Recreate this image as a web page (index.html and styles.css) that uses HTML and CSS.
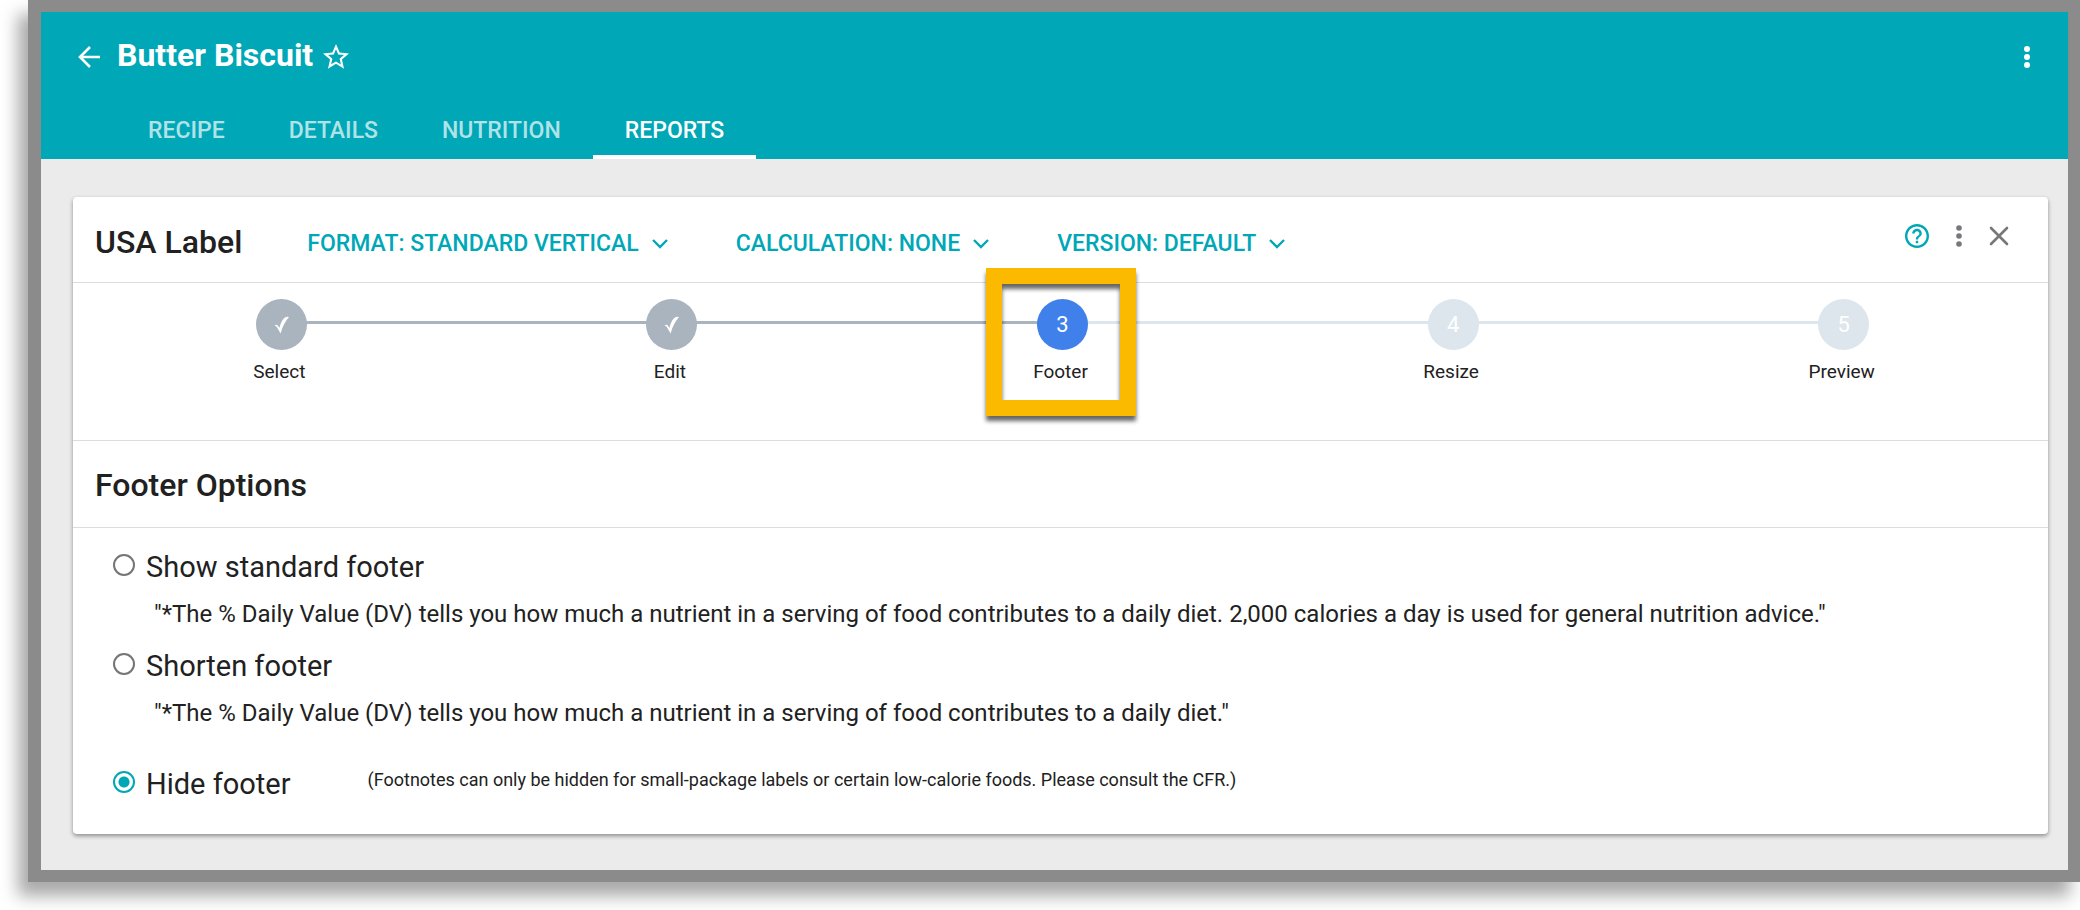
FILE: index.html
```html
<!DOCTYPE html>
<html lang="en">
<head>
<meta charset="utf-8">
<meta name="viewport" content="width=device-width, initial-scale=1">
<title>Butter Biscuit - Reports</title>
<link rel="stylesheet" href="styles.css">
</head>
<body>
<div class="frame">
  <header class="app-header">
    <div class="title-row">
      <button class="icon-btn" type="button" aria-label="Back">
        <svg width="22" height="22" viewBox="0 0 22 22" fill="none" stroke="#fff" stroke-width="2.6"><path d="M22 11H2M12 1L2 11l10 10"/></svg>
      </button>
      <h1 class="recipe-name">Butter Biscuit</h1>
      <button class="icon-btn star" type="button" aria-label="Favorite">
        <svg width="26" height="26" viewBox="2 2 20 20" fill="#fff"><path d="M22 9.24l-7.19-.62L12 2 9.19 8.63 2 9.24l5.46 4.73L5.82 21 12 17.27 18.18 21l-1.63-7.03L22 9.24zM12 15.4l-3.76 2.27 1-4.28-3.32-2.88 4.38-.38L12 6.1l1.71 4.04 4.38.38-3.32 2.88 1 4.28L12 15.4z"/></svg>
      </button>
      <button class="icon-btn push" type="button" aria-label="More actions">
        <svg width="6" height="22" viewBox="0 0 6 22" fill="#fff"><circle cx="3" cy="3" r="3"/><circle cx="3" cy="11" r="3"/><circle cx="3" cy="19" r="3"/></svg>
      </button>
    </div>
    <nav class="tabs">
      <a class="tab" href="#recipe">RECIPE</a>
      <a class="tab" href="#details">DETAILS</a>
      <a class="tab" href="#nutrition">NUTRITION</a>
      <a class="tab active" href="#reports" aria-current="page">REPORTS</a>
    </nav>
  </header>

  <main class="content">
    <section class="card">
      <div class="card-header">
        <h2 class="heading">USA Label</h2>
        <div class="menus">
          <button class="menu" type="button">FORMAT: STANDARD VERTICAL
            <svg width="16" height="10" viewBox="0 0 16 10" fill="none" stroke="currentColor" stroke-width="2.4"><path d="M1 1l7 7 7-7"/></svg></button>
          <button class="menu" type="button">CALCULATION: NONE
            <svg width="16" height="10" viewBox="0 0 16 10" fill="none" stroke="currentColor" stroke-width="2.4"><path d="M1 1l7 7 7-7"/></svg></button>
          <button class="menu" type="button">VERSION: DEFAULT
            <svg width="16" height="10" viewBox="0 0 16 10" fill="none" stroke="currentColor" stroke-width="2.4"><path d="M1 1l7 7 7-7"/></svg></button>
        </div>
        <div class="actions">
          <button class="icon-btn" type="button" aria-label="Help">
            <svg width="24" height="24" viewBox="2 2 20 20" fill="#00a7b7"><path d="M11 18h2v-2h-2v2zm1-16C6.48 2 2 6.48 2 12s4.48 10 10 10 10-4.48 10-10S17.52 2 12 2zm0 18c-4.41 0-8-3.59-8-8s3.59-8 8-8 8 3.59 8 8-3.59 8-8 8zm0-14c-2.21 0-4 1.79-4 4h2c0-1.1.9-2 2-2s2 .9 2 2c0 2-3 1.75-3 5h2c0-2.25 3-2.5 3-5 0-2.21-1.79-4-4-4z"/></svg>
          </button>
          <button class="icon-btn" type="button" aria-label="Label options">
            <svg width="6" height="22" viewBox="0 0 6 22" fill="#77787b"><circle cx="3" cy="3" r="2.8"/><circle cx="3" cy="11" r="2.8"/><circle cx="3" cy="19" r="2.8"/></svg>
          </button>
          <button class="icon-btn" type="button" aria-label="Close">
            <svg width="20" height="20" viewBox="0 0 20 20" fill="none" stroke="#77787b" stroke-width="2.6" stroke-linecap="round"><path d="M2 2l16 16M18 2L2 18"/></svg>
          </button>
        </div>
      </div>

      <ol class="steps">
        <li class="step done">
          <span class="dot"><svg width="15" height="18" viewBox="0 0 15 18" fill="#fff"><path d="M0.500 9.600Q2 8.200 3.400 9L5.400 12C6.400 7.500 8.500 3 11 1.400Q12.500 0.600 15 1C11.500 5 8.600 10 6.600 17.400Q5 15 3.200 11.500Q2.200 10 0.500 9.600Z"/></svg></span>
          <span class="step-name">Select</span>
        </li>
        <li class="step done">
          <span class="dot"><svg width="15" height="18" viewBox="0 0 15 18" fill="#fff"><path d="M0.500 9.600Q2 8.200 3.400 9L5.400 12C6.400 7.500 8.500 3 11 1.400Q12.500 0.600 15 1C11.500 5 8.600 10 6.600 17.400Q5 15 3.200 11.500Q2.200 10 0.500 9.600Z"/></svg></span>
          <span class="step-name">Edit</span>
        </li>
        <li class="step current" aria-current="step">
          <span class="dot">3</span>
          <span class="step-name">Footer</span>
          <span class="callout"></span>
        </li>
        <li class="step">
          <span class="dot">4</span>
          <span class="step-name">Resize</span>
        </li>
        <li class="step">
          <span class="dot">5</span>
          <span class="step-name">Preview</span>
        </li>
      </ol>

      <div class="section-title">
        <h2 class="heading">Footer Options</h2>
      </div>

      <form class="options">
        <div class="option">
          <input class="radio" type="radio" name="footer" id="footer-standard">
          <label class="option-name" for="footer-standard">Show standard footer</label>
        </div>
        <p class="sample">"*The % Daily Value (DV) tells you how much a nutrient in a serving of food contributes to a daily diet. 2,000 calories a day is used for general nutrition advice."</p>
        <div class="option">
          <input class="radio" type="radio" name="footer" id="footer-short">
          <label class="option-name" for="footer-short">Shorten footer</label>
        </div>
        <p class="sample">"*The % Daily Value (DV) tells you how much a nutrient in a serving of food contributes to a daily diet."</p>
        <div class="option last">
          <input class="radio" type="radio" name="footer" id="footer-hide" checked>
          <label class="option-name" for="footer-hide">Hide footer</label>
          <span class="note">(Footnotes can only be hidden for small-package labels or certain low-calorie foods. Please consult the CFR.)</span>
        </div>
      </form>
    </section>
  </main>
</div>
</body>
</html>
```
FILE: styles.css
```css
* {
  box-sizing: border-box;
}

body {
  margin: 0;
  background: #fff;
  color: #212121;
  font-family: Roboto, "Liberation Sans", sans-serif;
  overflow-x: hidden;
}

button {
  margin: 0;
  padding: 0;
  border: 0;
  background: none;
  font: inherit;
  color: inherit;
  cursor: pointer;
}

svg {
  display: block;
}

.frame {
  display: flex;
  flex-direction: column;
  min-height: calc(100vh - 28px);
  margin: 0 0 28px 28px;
  border: 12px solid #8b8b8b;
  border-left-width: 13px;
  background: #ebebeb;
  box-shadow: -10px 14px 16px rgba(0, 0, 0, 0.34);
}

.app-header {
  display: flex;
  flex-direction: column;
  justify-content: space-between;
  height: 147px;
  background: #00a7b7;
  color: #fff;
}

.title-row {
  display: flex;
  align-items: center;
  padding: 21px 38px 0 37px;
}

.icon-btn {
  flex: none;
  margin-top: 4px;
}

.recipe-name {
  margin: 0 10px 0 17px;
  font-size: 32px;
  line-height: 44px;
  font-weight: 700;
}

.push {
  margin-left: auto;
}

.tabs {
  display: flex;
  padding-left: 75px;
}

.tab {
  padding: 0 32px 6px;
  border-bottom: 4px solid transparent;
  color: rgba(255, 255, 255, 0.7);
  font-size: 23px;
  line-height: 36px;
  font-weight: 500;
  text-decoration: none;
}

.tab.active {
  border-color: #fff;
  color: #fff;
}

.content {
  flex: 1;
  padding: 38px 20px 36px 32px;
}

.card {
  border-radius: 4px;
  background: #fff;
  box-shadow: 0 2px 4px rgba(0, 0, 0, 0.4);
}

.card-header {
  display: flex;
  align-items: center;
  height: 86px;
  padding: 4px 39px 0 22px;
  border-bottom: 1px solid #dcdcdc;
}

.heading {
  margin: 0;
  font-size: 32px;
  line-height: 40px;
  font-weight: 500;
}

.menus {
  display: flex;
  gap: 68px;
  margin: 4px 0 0 65px;
}

.menu {
  display: flex;
  align-items: center;
  gap: 13px;
  color: #00a7b7;
  font-size: 23px;
  line-height: 40px;
  font-weight: 500;
}

.actions {
  display: flex;
  align-items: center;
  gap: 27px;
  margin: 0 0 16px auto;
}

.steps {
  display: flex;
  margin: 0;
  padding: 16px 9px 56px 13px;
  border-bottom: 1px solid #dcdcdc;
  list-style: none;
}

.step {
  position: relative;
  display: flex;
  flex: 1;
  flex-direction: column;
  align-items: center;
  gap: 10px;
}

.step + .step::before {
  content: "";
  position: absolute;
  top: 22px;
  right: 50%;
  width: 100%;
  height: 3px;
  background: #dde6ed;
}

.step.done + .step::before {
  background: #aab4be;
}

.dot {
  z-index: 1;
  display: flex;
  align-items: center;
  justify-content: center;
  width: 51px;
  height: 51px;
  border-radius: 50%;
  background: #dde6ed;
  color: #fff;
  font-size: 22px;
  line-height: 24px;
}

.done .dot {
  background: #aab4be;
}

.current .dot {
  background: #4080ea;
}

.step-name {
  padding-right: 4px;
  font-size: 19px;
  line-height: 24px;
}

.callout {
  position: absolute;
  z-index: 2;
  top: -31px;
  left: 50%;
  width: 150px;
  height: 148px;
  margin-left: -76px;
  border: 16px solid #fbb900;
  filter: drop-shadow(0 5px 2px rgba(0, 0, 0, 0.6));
}

.section-title {
  padding: 24px 22px 22px;
  border-bottom: 1px solid #dcdcdc;
}

.options {
  padding: 18px 40px 29px;
}

.option {
  display: flex;
  align-items: center;
  gap: 11px;
}

.option.last {
  margin-top: 19px;
}

.radio {
  flex: none;
  width: 22px;
  height: 22px;
  margin: 0 0 4px;
  border: 2px solid #757575;
  border-radius: 50%;
  background: #fff;
  appearance: none;
}

.radio:checked {
  border-color: #00a7b7;
  background: radial-gradient(circle, #00a7b7 5px, #fff 6px);
}

.option-name {
  font-size: 29px;
  line-height: 42px;
}

.sample {
  margin: 0 0 0 41px;
  padding: 8px 0 13px;
  font-size: 24px;
  line-height: 36px;
}

.note {
  margin: 0 0 8px 66px;
  font-size: 18px;
  line-height: 24px;
}
```
